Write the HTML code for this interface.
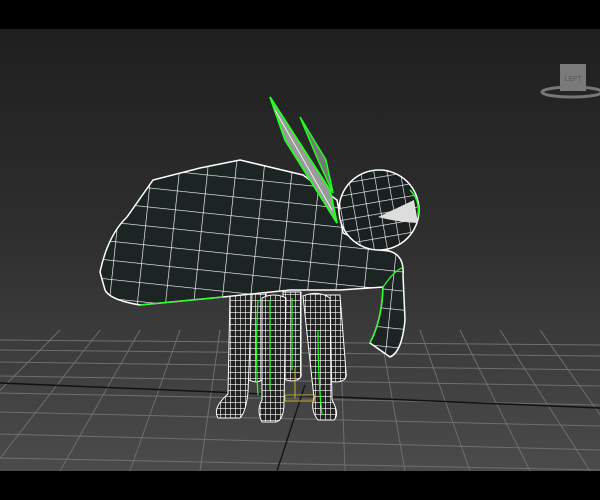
<!DOCTYPE html>
<html><head><style>html,body{margin:0;padding:0;background:#000;}svg{display:block}</style></head><body>
<svg width="600" height="500" viewBox="0 0 600 500" xmlns="http://www.w3.org/2000/svg">
<defs>
<linearGradient id="bg" x1="0" y1="0" x2="0" y2="1">
<stop offset="0" stop-color="#1f1f1f"/><stop offset="0.45" stop-color="#2e2e2e"/><stop offset="1" stop-color="#4b4b4b"/>
</linearGradient>
<pattern id="bm" width="28" height="19" patternUnits="userSpaceOnUse" patternTransform="rotate(6)">
<rect width="28" height="19" fill="#1d2424"/>
<path d="M0 0H28M0 0V19" stroke="#fff" stroke-width="1.3" fill="none"/>
</pattern>
<pattern id="lm" width="5" height="6" patternUnits="userSpaceOnUse">
<rect width="5" height="6" fill="#222"/>
<path d="M0 0H5M0 0V6" stroke="#fff" stroke-width="1.2" fill="none"/>
</pattern>
<pattern id="hm" width="13" height="12" patternUnits="userSpaceOnUse" patternTransform="rotate(-10)">
<rect width="13" height="12" fill="#1a2020"/>
<path d="M0 0H13M0 0V12" stroke="#fff" stroke-width="1.2" fill="none"/>
</pattern>
</defs>
<rect width="600" height="500" fill="#000"/>
<rect y="29" width="600" height="442" fill="url(#bg)"/>
<g stroke="#6e6e6e" stroke-width="1" fill="none">
<path d="M0 340L600 345M0 350L600 356M0 362L600 370M0 376L600 386M0 393L600 405M0 412L600 426M0 434L600 450M0 458L600 470"/>
<path d="M60 330L-80 471M100 330L-10 471M140 330L60 471M180 330L130 471M220 330L200 471M340 330L345 471M380 330L405 471M420 330L470 471M460 330L530 471M500 330L590 471M540 330L640 471"/>
</g>
<path d="M0 383L600 408" stroke="#111" stroke-width="1.5"/>
<path d="M277 471L305 385" stroke="#111" stroke-width="1.3"/>
<g stroke="#fff" stroke-width="1">
<path d="M245 290H266V372Q268 380 256 382Q243 380 245 372Z" fill="url(#lm)"/>
<path d="M283 292H301V372Q303 380 292 381Q280 380 283 372Z" fill="url(#lm)"/>
<path d="M318 295H340L346 372Q348 382 335 382Q320 380 320 372Z" fill="url(#lm)"/>
<path d="M230 294Q240 288 252 294L248 392Q246 412 240 418H218Q212 408 228 394Z" fill="url(#lm)"/>
<path d="M262 298Q274 292 286 298L284 402Q284 420 276 422H262Q256 410 262 400Z" fill="url(#lm)"/>
<path d="M303 296Q318 290 330 298L332 400Q340 414 334 420H318Q310 410 314 398Z" fill="url(#lm)"/>
</g>
<path d="M258 300Q255 350 258 395M270 300V390M292 298V370M318 330Q318 380 322 415" stroke="#2f2" stroke-width="1.2" fill="none"/>
<path d="M295 368V398M285 395H315V401H285Z" stroke="#bfb030" fill="none"/>
<path d="M100 272Q108 235 127 217L153 180L200 168L240 160L303 175L337 200L343 233L380 250Q405 250 403 275L405 320Q402 352 390 357L370 343Q382 320 383 287L340 290L290 290L223 297L140 305Q110 300 105 290Z" fill="url(#bm)" stroke="#fff" stroke-width="1.5"/>
<path d="M370 343Q382 320 383 287Q395 270 402 268M140 305L223 297" stroke="#2f2" stroke-width="1.3" fill="none"/>
<circle cx="379" cy="210" r="40" fill="url(#hm)" stroke="#fff" stroke-width="1.5"/>
<path d="M378 217L414 200L418 223Q396 222 378 217Z" fill="#ddd"/>
<path d="M410 190Q420 200 418 215" stroke="#2f2" stroke-width="1.5" fill="none"/>
<path d="M270 97L285 140L337 223L330 190Z" fill="#9a9a9a" stroke="#2f2" stroke-width="1.8"/>
<path d="M300 117L318 160L333 193L326 160Z" fill="#777" stroke="#2f2" stroke-width="1.5"/>
<path d="M275 110L332 210" stroke="#fff" stroke-width="0.8"/>
<ellipse cx="572" cy="92" rx="30" ry="5" fill="none" stroke="#777" stroke-width="3"/>
<rect x="560" y="64" width="26" height="27" fill="#7a7a7a"/>
<text x="573" y="81" font-family="Liberation Sans,sans-serif" font-size="7" fill="#555" text-anchor="middle">LEFT</text>
</svg>
</body></html>
